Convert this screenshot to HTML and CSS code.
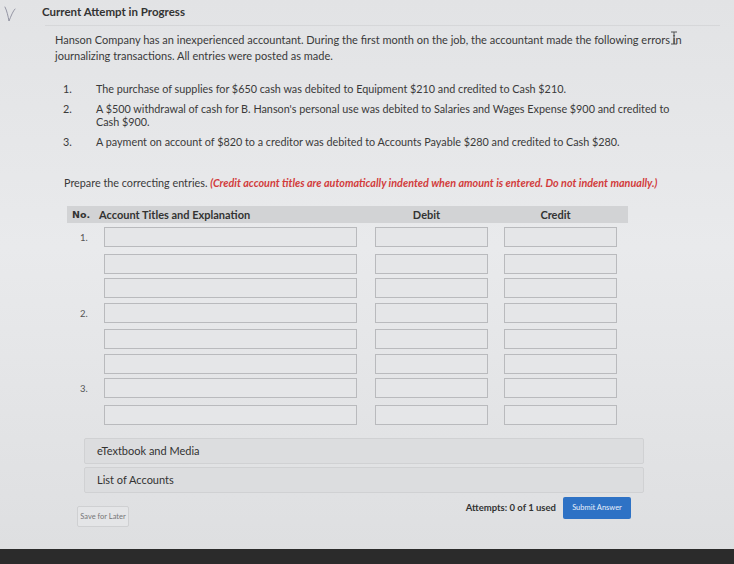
FILE: index.html
```html
<!DOCTYPE html>
<html>
<head>
    <meta charset="UTF-8">
    <title>Current Attempt in Progress</title>
    <link rel="stylesheet" href="styles.css">
</head>
<body>
    <div class="screen">
        <svg class="tick" width="14" height="18" viewBox="0 0 14 18">
            <path d="M2 2 C4 6 5 11 6 16 C8 11 10 6 12 4" fill="none" stroke="#8b8c9c" stroke-width="0.9" stroke-linecap="round"/>
        </svg>
        <svg class="ibeam" width="8" height="14" viewBox="0 0 8 14">
            <path d="M1 1 H7 M4 1 V13 M1 13 H7" fill="none" stroke="#444" stroke-width="0.9"/>
        </svg>
        <h1 class="title">Current Attempt in Progress</h1>
        <div class="rule"></div>

        <p class="question">Hanson Company has an inexperienced accountant. During the first month on the job, the accountant made the following errors in journalizing transactions. All entries were posted as made.</p>

        <ol class="errors">
            <li><span class="num">1.</span><span>The purchase of supplies for $650 cash was debited to Equipment $210 and credited to Cash $210.</span></li>
            <li><span class="num">2.</span><span>A $500 withdrawal of cash for B. Hanson's personal use was debited to Salaries and Wages Expense $900 and credited to Cash $900.</span></li>
            <li><span class="num">3.</span><span>A payment on account of $820 to a creditor was debited to Accounts Payable $280 and credited to Cash $280.</span></li>
        </ol>

        <p class="prepare">Prepare the correcting entries. <em class="note">(Credit account titles are automatically indented when amount is entered. Do not indent manually.)</em></p>

        <div class="journal">
            <div class="jhead">
                <span class="hno">No.</span>
                <span class="hacc">Account Titles and Explanation</span>
                <span class="hamt">Debit</span>
                <span class="hamt">Credit</span>
            </div>

            <div class="jrow"><span class="rno">1.</span><div class="box"></div><div class="box"></div><div class="box"></div></div>
            <div class="jrow"><span class="rno"></span><div class="box"></div><div class="box"></div><div class="box"></div></div>
            <div class="jrow"><span class="rno"></span><div class="box"></div><div class="box"></div><div class="box"></div></div>
            <div class="jrow"><span class="rno">2.</span><div class="box"></div><div class="box"></div><div class="box"></div></div>
            <div class="jrow"><span class="rno"></span><div class="box"></div><div class="box"></div><div class="box"></div></div>
            <div class="jrow"><span class="rno"></span><div class="box"></div><div class="box"></div><div class="box"></div></div>
            <div class="jrow"><span class="rno">3.</span><div class="box"></div><div class="box"></div><div class="box"></div></div>
            <div class="jrow"><span class="rno"></span><div class="box"></div><div class="box"></div><div class="box"></div></div>
        </div>

        <div class="panels">
            <div class="panel">eTextbook and Media</div>
            <div class="panel">List of Accounts</div>
        </div>

        <div class="actions">
            <button class="save">Save for Later</button>
            <div class="submitwrap">
                <span class="attempts">Attempts: 0 of 1 used</span>
                <button class="submit">Submit Answer</button>
            </div>
        </div>
    </div>
    <div class="bezel"></div>
</body>
</html>
```

FILE: styles.css
```css
body {
    margin: 0;
    background: #2b2b2b;
    font-family: Lato, "Open Sans", sans-serif;
    color: #3a3a3a;
}

.screen {
    position: relative;
    height: 549px;
    padding: 5px 0 0 42px;
    box-sizing: border-box;
    background: linear-gradient(180deg, #e2e3e5 0%, #e9eaec 45%, #dedfe1 100%);
    overflow: hidden;
}

.tick {
    position: absolute;
    left: 3px;
    top: 5px;
}

.ibeam {
    position: absolute;
    left: 670px;
    top: 31px;
}

.title {
    margin: 0;
    font-size: 11.5px;
    line-height: 14px;
    font-weight: bold;
    color: #333;
}

.rule {
    margin: 6px 14px 0 3px;
    height: 1px;
    background: #d6d7d9;
}

.question {
    margin: 6px 0 0 13px;
    width: 630px;
    font-size: 11px;
    line-height: 16px;
}

.errors {
    list-style: none;
    margin: 18px 0 0 21px;
    padding: 0;
    font-size: 10.8px;
    line-height: 13px;
}

.errors li {
    display: flex;
    width: 625px;
    margin-bottom: 7px;
}

.num {
    width: 33px;
    flex: none;
}

.prepare {
    margin: 28px 0 0 22px;
    font-size: 10.8px;
    line-height: 14px;
}

.note {
    color: #d23c3c;
    font-weight: bold;
}

.journal {
    margin: 16px 0 0 25px;
    width: 561px;
}

.jhead {
    display: grid;
    grid-template-columns: 32px 271px 113px 16px 113px;
    height: 17px;
    align-items: center;
    background: #d2d3d5;
    font-size: 11px;
    font-weight: bold;
    color: #333;
}

.jhead .hno {
    padding-left: 5px;
    font-family: "DejaVu Sans", sans-serif;
    font-size: 9.5px;
}

.jhead .hamt {
    text-align: center;
}

.jhead .hamt:last-child {
    grid-column: 5;
}

.jrow {
    display: grid;
    grid-template-columns: 37px 253px 113px 113px;
    margin-top: 4.5px;
}

.jhead + .jrow {
    margin-top: 4px;
}

.jrow .box:nth-child(3) {
    margin-left: 18px;
}

.jrow .box:nth-child(4) {
    margin-left: 34px;
}

.rno {
    padding-left: 13px;
    font-size: 9.5px;
    line-height: 22px;
    color: #555;
}

.box {
    height: 18px;
    border: 1px solid #b9babd;
    background: #e5e6e8;
}

.box:nth-child(3),
.box:nth-child(4) {
    width: 111px;
}

.panels {
    display: flex;
    flex-direction: column;
    gap: 3px;
    margin: 13px 0 0 42px;
    width: 560px;
}

.panel {
    height: 24px;
    padding-left: 12px;
    border: 1px solid #d0d1d3;
    border-radius: 2px;
    background: #dcdddf;
    font-size: 11px;
    line-height: 24px;
    color: #333;
}

.actions {
    display: flex;
    justify-content: space-between;
    width: 554px;
    margin-left: 35px;
}

.save {
    margin-top: 13px;
    width: 52px;
    height: 21px;
    padding: 0;
    border: 1px solid #cfd0d2;
    border-radius: 2px;
    background: #e4e5e7;
    font-family: Lato, sans-serif;
    font-size: 7.5px;
    color: #777;
}

.submitwrap {
    display: flex;
    align-items: center;
    gap: 7px;
    margin-top: -4px;
}

.attempts {
    font-size: 9.5px;
    font-weight: bold;
    color: #333;
}

.submit {
    width: 68px;
    height: 22px;
    padding: 0;
    border: none;
    border-radius: 2px;
    background: #2e72c5;
    font-family: Lato, sans-serif;
    font-size: 7.5px;
    color: #e8eefa;
}

.bezel {
    height: 15px;
    background: #2b2b2b;
}
```
